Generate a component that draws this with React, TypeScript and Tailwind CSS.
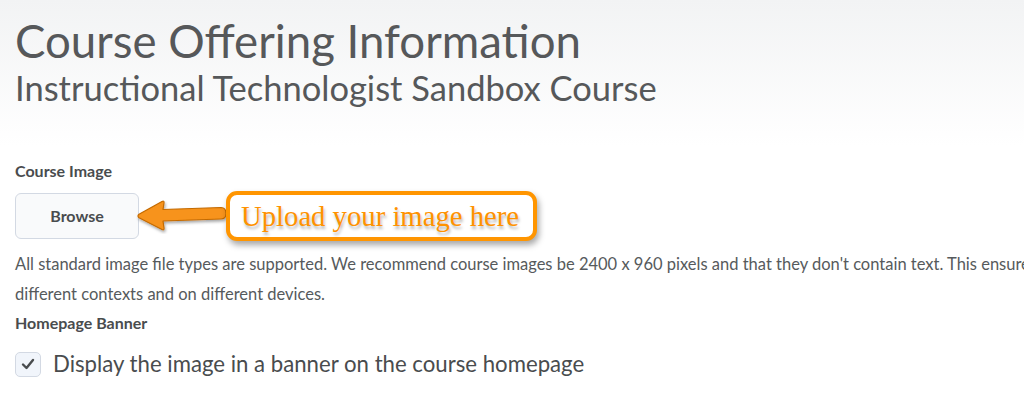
import React from "react";

const Arrow = () => (
  <svg width="92" height="36" viewBox="0 0 92 36" className="shrink-0 -ml-[3px] -mr-[2px] mt-[-1px]">
    <defs>
      <filter id="arrowShadow" x="-20%" y="-40%" width="140%" height="200%">
        <feDropShadow dx="1" dy="2" stdDeviation="1.5" floodColor="#000" floodOpacity="0.35" />
      </filter>
    </defs>
    <path
      d="M2 18 Q2 17 3 16.3 L26 3.5 Q28.5 2.5 28 5 L27 11.5 L85 9.5 Q90 9.5 90 15.5 Q90 21 85 21 L27 23 L28 30 Q28.5 32.5 26 31.5 L3 19.7 Q2 19 2 18 Z"
      fill="#f7931a"
      stroke="#c46a00"
      strokeWidth="1.2"
      strokeLinejoin="round"
      filter="url(#arrowShadow)"
    />
  </svg>
);

export default function App() {
  return (
    <div className="w-[1024px] h-[412px] overflow-hidden bg-white font-['Lato',sans-serif] text-[#494c4e]">
      <div className="bg-gradient-to-b from-[#f2f3f4] to-white px-[15px] pt-[15px] pb-[38px]">
        <h1 className="text-[45.6px] leading-[52px] font-normal text-[#56585a]">
          Course Offering Information
        </h1>
        <h2 className="text-[34.5px] leading-[40px] font-normal text-[#56585a] mt-[1px]">
          Instructional Technologist Sandbox Course
        </h2>
      </div>

      <div className="px-[15px] pt-[15px]">
        <div className="text-[16px] font-bold leading-[20px] text-[#494c4e]">Course Image</div>

        <div className="mt-[10px] flex items-center">
          <button className="w-[124px] h-[46px] rounded-[6px] border border-[#d3d9e3] bg-[#f9fafb] text-[16px] font-bold text-[#494c4e]">
            Browse
          </button>
          <Arrow />
          <div className="h-[50px] w-[311px] rounded-[11px] border-[4px] border-[#ff9500] bg-white shadow-[2px_4px_6px_rgba(0,0,0,0.35)] flex items-center pl-[11px]">
            <span className="font-['Liberation_Serif',serif] text-[28.7px] leading-none text-[#ff9200] [text-shadow:1px_3px_3px_rgba(0,0,0,0.28)]">
              Upload your image here
            </span>
          </div>
        </div>

        <p className="mt-[8px] text-[16.5px] leading-[30px] text-[#565a5c] whitespace-nowrap">
          All standard image file types are supported. We recommend course images be 2400 x 960 pixels and that they don't contain text. This ensures they look good in
          <br />
          different contexts and on different devices.
        </p>

        <div className="mt-[4px] text-[16px] font-bold leading-[20px] text-[#494c4e]">Homepage Banner</div>

        <label className="mt-[17px] flex items-center gap-[12px]">
          <span className="w-[26px] h-[25px] rounded-[5px] border border-[#d3d9e3] bg-[#f1f5fb] flex items-center justify-center">
            <svg width="14" height="12" viewBox="0 0 14 12">
              <path d="M2 6.5 L5.5 10 L12 2" fill="none" stroke="#494c4e" strokeWidth="2.4" strokeLinecap="round" strokeLinejoin="round" />
            </svg>
          </span>
          <span className="text-[22.2px] leading-[28px] text-[#494c4e]">
            Display the image in a banner on the course homepage
          </span>
        </label>
      </div>
    </div>
  );
}
